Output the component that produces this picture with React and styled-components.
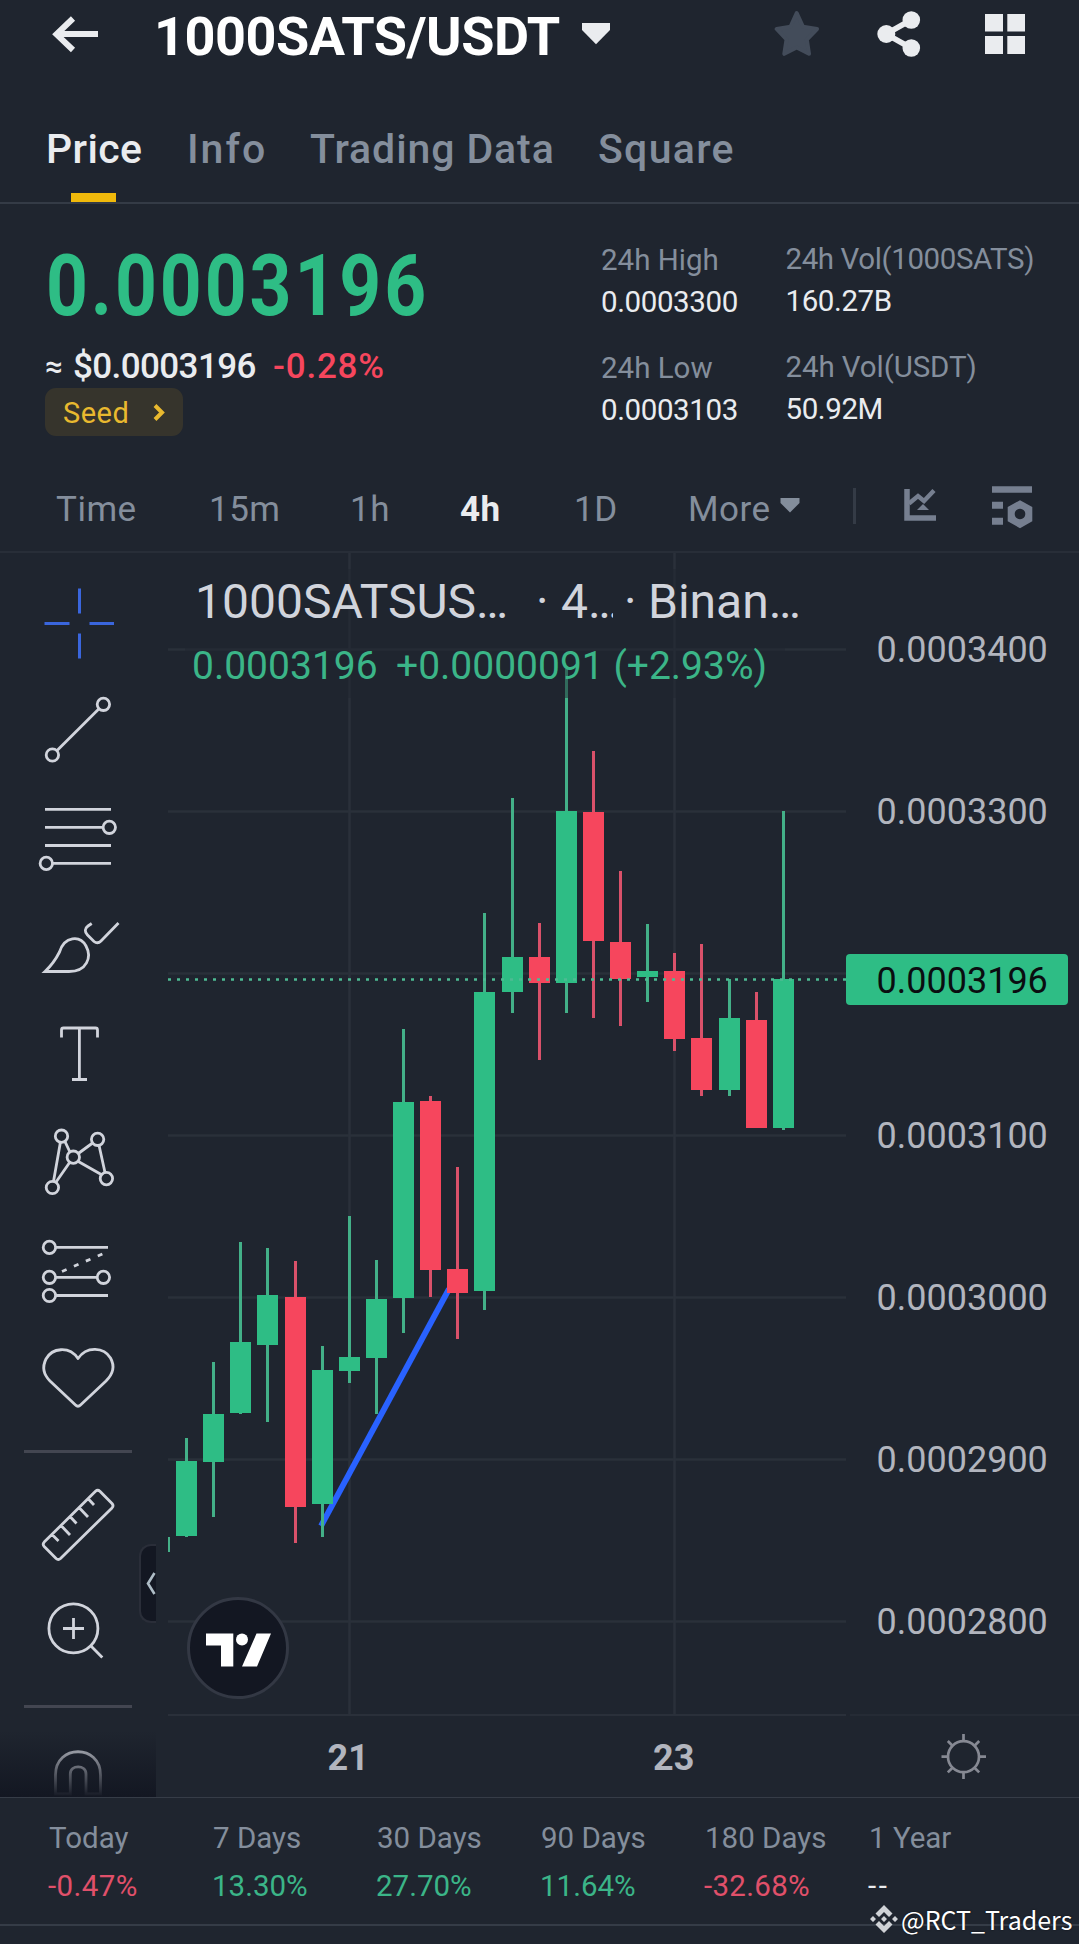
import React from "react";
import styled, { createGlobalStyle } from "styled-components";

const GREEN = "#2ebd85";
const RED = "#f6465d";
const BG = "#1f252f";

const GlobalStyle = createGlobalStyle`
  * {
    box-sizing: border-box;
  }
  body {
    margin: 0;
    background: ${BG};
    font-family: Roboto, "Liberation Sans", sans-serif;
  }
  svg {
    display: block;
    flex: none;
  }
`;

const Page = styled.div`
  position: relative;
  width: 1079px;
  height: 1944px;
  overflow: hidden;
  background: ${BG};
  color: #eaecef;
  white-space: pre;
`;

/* ---------- header ---------- */

const Header = styled.header`
  display: flex;
  align-items: center;
  height: 72px;
  padding: 0 54px 0 45px;
`;

const Title = styled.h1`
  width: 424px;
  margin: 0 0 0 49px;
  font-size: 54px;
  line-height: 73px;
  font-weight: 700;
  letter-spacing: -0.5px;
  color: #fff;
`;

const Actions = styled.div`
  display: flex;
  align-items: center;
  gap: 57px;
  margin-left: auto;
`;

const Tabs = styled.nav`
  display: grid;
  grid-template-columns: 141px 123px 288px auto;
  height: 132px;
  padding: 25px 0 0 46px;
  border-bottom: 2px solid #343b46;
`;

const Tab = styled.div`
  position: relative;
  font-size: 41px;
  line-height: 105px;
  font-weight: 500;
  letter-spacing: ${(p) => p.$spacing || 0}px;
  color: ${(p) => (p.$active ? "#eaecef" : "#848e9c")};

  &::after {
    content: "";
    display: ${(p) => (p.$active ? "block" : "none")};
    position: absolute;
    left: 25px;
    bottom: 0;
    width: 45px;
    height: 9px;
    background: #f0b90b;
  }
`;

/* ---------- price summary ---------- */

const Summary = styled.section`
  display: flex;
  height: 262px;
`;

const PriceBlock = styled.div`
  display: flex;
  flex-direction: column;
  align-items: flex-start;
  width: 601px;
  padding: 37px 0 0 45px;
`;

const BigPrice = styled.div`
  font-size: 85px;
  line-height: 90px;
  font-weight: 700;
  letter-spacing: 3.4px;
  transform: scaleX(0.86);
  transform-origin: left;
  margin-left: 1px;
  color: ${GREEN};
`;

const FiatRow = styled.div`
  display: flex;
  margin-top: 14px;
  font-size: 35px;
  line-height: 43px;
  font-weight: 500;
`;

const Approx = styled.span`
  width: 28px;
  font-size: 31px;
`;

const Fiat = styled.span`
  width: 200px;
  letter-spacing: -0.6px;
`;

const Change = styled.span`
  letter-spacing: 0.8px;
  color: ${RED};
`;

const Seed = styled.div`
  display: flex;
  align-items: center;
  justify-content: space-between;
  width: 138px;
  height: 48px;
  padding: 2px 17px 0 18px;
  border-radius: 11px;
  background: #36342c;
  color: #e9b92f;
  font-size: 29px;
  letter-spacing: 0.5px;
`;

const StatColumn = styled.div`
  width: ${(p) => p.$width}px;
  padding-top: ${(p) => p.$top}px;
`;

const Stat = styled.div`
  margin-bottom: 24px;
  font-size: 29.5px;
  line-height: 42px;
`;

const StatLabel = styled.div`
  color: #848e9c;
  letter-spacing: ${(p) => p.$spacing || 0}px;
`;

const StatValue = styled.div`
  letter-spacing: -0.4px;
`;

/* ---------- interval bar ---------- */

const Intervals = styled.div`
  display: flex;
  align-items: center;
  height: 87px;
  padding-left: 56px;
  border-bottom: 2px solid #282e38;
`;

const Interval = styled.div`
  width: ${(p) => p.$width}px;
  padding-top: 2px;
  font-size: 35px;
  letter-spacing: 0.5px;
  font-weight: ${(p) => (p.$active ? 700 : 400)};
  color: ${(p) => (p.$active ? "#eaecef" : "#848e9c")};
`;

const IntervalDivider = styled.div`
  width: 3px;
  height: 36px;
  margin: 0 47px 6px 53px;
  background: #343b46;
`;

/* ---------- chart ---------- */

const ChartArea = styled.section`
  display: flex;
  height: 1244px;
`;

const Toolbar = styled.aside`
  position: relative;
  width: 156px;
  height: 1244px;
  padding-top: 16px;
  overflow: hidden;
`;

const ToolDivider = styled.div`
  width: 108px;
  height: 3px;
  margin: ${(p) => p.$margin};
  background: #434651;
`;

const ToolbarFade = styled.div`
  position: absolute;
  left: 0;
  right: 0;
  bottom: 0;
  height: 66px;
  background: linear-gradient(rgba(19, 23, 34, 0), #131722);
`;

const CollapseTab = styled.div`
  position: absolute;
  right: 0;
  top: 991px;
  width: 17px;
  height: 79px;
  border: 2px solid #2a2e39;
  border-right: 0;
  border-radius: 12px 0 0 12px;
  background: #131722;
`;

const ChartMain = styled.div`
  display: flex;
  flex-direction: column;
  width: 923px;
  padding-left: 12px;
`;

const ChartTop = styled.div`
  display: flex;
  height: 1161px;
`;

const Pane = styled.div`
  position: relative;
  width: 678px;
`;

const Legend = styled.div`
  position: absolute;
  left: 17px;
  top: 16px;
  width: 600px;
  height: 129px;
  background: rgba(31, 37, 47, 0.5);
`;

const LegendTitle = styled.div`
  display: flex;
  height: 65px;
  padding-left: 10px;
  font-size: 48px;
  line-height: 66px;
  color: #d1d4dc;
`;

const LegendPart = styled.span`
  flex: none;
  width: ${(p) => p.$width}px;
  margin-right: ${(p) => p.$gap || 0}px;
  overflow: hidden;
`;

const LegendValues = styled.div`
  display: flex;
  padding-left: 7px;
  font-size: 39px;
  line-height: 65px;
  color: #3bb588;
`;

const LogoBadge = styled.div`
  position: absolute;
  left: 19px;
  top: 1044px;
  width: 102px;
  height: 102px;
  display: flex;
  align-items: center;
  justify-content: center;
  padding-top: 3px;
  border: 3px solid #333844;
  border-radius: 50%;
  background: #131722;
`;

const PriceAxis = styled.div`
  width: 233px;
  padding-top: 15.5px;
`;

const AxisCell = styled.div`
  display: flex;
  align-items: center;
  height: 162.15px;
  padding-left: ${(p) => (p.$current ? 0 : 30.5)}px;
  padding-top: ${(p) => (p.$current ? 11 : 0)}px;
  font-size: 36px;
  color: #b2b5be;
`;

const CurrentPrice = styled.div`
  width: 222px;
  height: 51px;
  padding-left: 30.5px;
  border-radius: 4px;
  line-height: 54px;
  background: ${GREEN};
  color: #0a0d10;
`;

const TimeRow = styled.div`
  display: flex;
  height: 83px;
`;

const TimeAxis = styled.div`
  display: flex;
  width: 678px;
  margin-right: 4px;
  padding-left: 17.5px;
  border-top: 2px solid #2a303a;
`;

const TimeLabel = styled.div`
  width: 325.5px;
  font-size: 36px;
  line-height: 84px;
  font-weight: 700;
  text-align: center;
  color: #b2b5be;
`;

const AxisSettings = styled.div`
  width: 229px;
  border-top: 2px solid #252b35;
`;

/* ---------- footer ---------- */

const Periods = styled.section`
  display: grid;
  grid-template-columns: repeat(6, 164px);
  height: 129px;
  padding: 16px 0 0 49px;
  border-top: 1px solid #363c47;
  border-bottom: 2px solid #353c47;
  font-size: 29.5px;
  line-height: 48px;
`;

const PeriodLabel = styled.div`
  color: #848e9c;
`;

const PeriodValue = styled.div`
  margin-left: -1px;
  letter-spacing: ${(p) => p.$spacing || 0}px;
  color: ${(p) => p.$color};
`;

const Watermark = styled.div`
  position: absolute;
  left: 869px;
  top: 1901px;
  display: flex;
  align-items: center;
  gap: 2px;
  font-family: "Noto Sans CJK SC", sans-serif;
  font-size: 25px;
  line-height: 36px;
  color: #fff;
  text-shadow: 0 0 2px rgba(0, 0, 0, 0.6);
`;

// [x, high, bodyTop, bodyBottom, low, up]
const candles = [
  [186.5, 1438, 1461, 1536, 1537, 1],
  [213.5, 1362, 1414, 1462, 1517, 1],
  [240.5, 1242, 1342, 1413, 1414, 1],
  [267.5, 1248, 1295, 1345, 1422, 1],
  [295.5, 1261, 1297, 1507, 1543, 0],
  [322.5, 1346, 1370, 1504, 1537, 1],
  [349.5, 1216, 1357, 1371, 1383, 1],
  [376.5, 1260, 1299, 1358, 1414, 1],
  [403.5, 1029, 1102, 1298, 1333, 1],
  [430.5, 1096, 1101, 1270, 1297, 0],
  [457.5, 1167, 1269, 1293, 1339, 0],
  [484.5, 913, 992, 1291, 1310, 1],
  [512.5, 798, 957, 992, 1013, 1],
  [539.5, 923, 957, 983, 1060, 0],
  [566.5, 669, 811, 983, 1013, 1],
  [593.5, 751, 812, 941, 1018, 0],
  [620.5, 871, 942, 979, 1026, 0],
  [647.5, 924, 971, 977, 1002, 1],
  [674.5, 953, 971, 1039, 1051, 0],
  [701.5, 944, 1038, 1090, 1096, 0],
  [729.5, 979, 1018, 1090, 1096, 1],
  [756.5, 992, 1020, 1128, 1128, 0],
  [783.5, 811, 979, 1128, 1130, 1],
];

const gridRows = [649.5, 811.5, 973.5, 1135.5, 1297.5, 1459.5, 1621.5];

const CandleChart = () => (
  <svg width="678" height="1161" viewBox="168 553 678 1161">
    <g stroke="#2a303a" strokeWidth="2.6">
      {gridRows.map((y) => (
        <line key={y} x1="168" x2="846" y1={y} y2={y} />
      ))}
      <line x1="349.5" x2="349.5" y1="553" y2="1714" />
      <line x1="674.5" x2="674.5" y1="553" y2="1714" />
    </g>
    <line x1="321" y1="1526" x2="449" y2="1289" stroke="#2962ff" strokeWidth="5.8" />
    <rect x="168" y="1537" width="2" height="15" fill="#45b088" />
    {candles.map(([x, high, top, bottom, low, up]) => (
      <g key={x}>
        <rect x={x - 1.5} y={high} width="3" height={low - high} fill={up ? "#43b088" : "#d9516a"} />
        <rect x={x - 10.5} y={top} width="21" height={bottom - top} fill={up ? GREEN : RED} />
      </g>
    ))}
    <line x1="168" x2="846" y1="979.5" y2="979.5" stroke="#4dbb93" strokeWidth="2.6" strokeDasharray="3 6" />
  </svg>
);

const Tool = ({ top, height = 108, children }) => (
  <svg
    width="156"
    height={height}
    viewBox={`0 ${top} 156 ${height}`}
    fill="none"
    stroke="#d1d4dc"
    strokeWidth="2.8"
  >
    {children}
  </svg>
);

const Tools = () => (
  <Toolbar>
    <Tool top={569}>
      <path
        d="M79.5 588.5V613.5M79.5 633.5V658.5M44.5 623.5H69.5M89.5 623.5H114"
        stroke="#3a66dd"
        strokeWidth="3"
      />
    </Tool>
    <Tool top={677}>
      <circle cx="103.4" cy="704.3" r="6.2" />
      <circle cx="52.4" cy="755" r="6.2" />
      <path d="M99 708.7L56.8 750.7" />
    </Tool>
    <Tool top={785}>
      <path d="M45 809.4H111M45 827.3H102.5M45 845.5H111M53 863.4H111" />
      <circle cx="109.3" cy="827.3" r="6.2" />
      <circle cx="46.3" cy="863.4" r="6.2" />
    </Tool>
    <Tool top={893}>
      <path d="M45 971.5C52 965 56 959 59.5 952C64.5 936 80 935 86 946C92 957 87 971.5 69 971.5Z" />
      <path d="M91.7 923.5L88 926C84.5 928.5 84.5 932 87.5 935L94 941.5C96.5 943.5 98.5 943.5 101 941L118.5 923" />
    </Tool>
    <Tool top={1001}>
      <path d="M61.5 1037.5V1030Q61.5 1028 63.5 1028H95.5Q97.5 1028 97.5 1030V1037.5M79.4 1028V1079.5M72 1079.5H87" />
    </Tool>
    <Tool top={1109}>
      <circle cx="61.5" cy="1136.2" r="6.2" />
      <circle cx="97.6" cy="1139.3" r="6.2" />
      <circle cx="73.3" cy="1157.2" r="6.2" />
      <circle cx="52.4" cy="1187.5" r="6.2" />
      <circle cx="106.4" cy="1178.6" r="6.2" />
      <path d="M64.9 1141.4L69.9 1152M78.3 1153.5L92.6 1143M60.4 1142.3L53.5 1181.4M55.9 1182.3L69.8 1162.3M77.9 1161.2L101.7 1174.7M99 1145.3L105 1172.5" />
    </Tool>
    <Tool top={1217}>
      <circle cx="49.4" cy="1247.4" r="6.2" />
      <circle cx="49.4" cy="1277.3" r="6.2" />
      <circle cx="103.4" cy="1277.3" r="6.2" />
      <circle cx="49.4" cy="1295.5" r="6.2" />
      <path d="M55.6 1247.4H108M55.6 1277.3H97.2M55.6 1295.5H108" />
      <path d="M62 1271.5L103.5 1253.5" strokeDasharray="5 8" />
    </Tool>
    <Tool top={1325}>
      <path
        d="M78 1358.5C69 1345.5 52 1348 46 1359C42 1367 44 1375 50 1381L75.5 1405Q78 1407.5 80.5 1405L106 1381C113 1374 115 1366 110.5 1358C104 1347.5 87 1345.5 78 1358.5Z"
        strokeLinejoin="round"
      />
    </Tool>
    <ToolDivider $margin="17px 0 18px 24px" />
    <Tool top={1471}>
      <path
        d="M95.5 1491.2Q97.7 1489.2 99.9 1491.2L112 1503.5Q114 1505.7 112 1507.9L60.5 1558.5Q58.3 1560.5 56.1 1558.5L44.2 1546.5Q42.2 1544.3 44.2 1542.1ZM88 1498.5L94 1505M79 1507.5L88 1517M70 1516.5L76.5 1523.5M61 1525.5L70 1535M52 1534.5L58.5 1541"
        strokeLinejoin="round"
      />
    </Tool>
    <Tool top={1579}>
      <circle cx="73.4" cy="1628.4" r="24.5" />
      <path d="M63 1628.5H84M73.5 1618V1639M90.5 1645.5L102.3 1657.5" />
    </Tool>
    <ToolDivider $margin="18px 0 0 24px" />
    <Tool top={1708} height={89}>
      <path d="M55.5 1794V1775C55.5 1744 100.5 1744 100.5 1775V1794H86V1774C86 1764.5 70.3 1764.5 70.3 1774V1794Z" />
    </Tool>
    <ToolbarFade />
    <CollapseTab>
      <svg width="15" height="75" viewBox="0 0 15 75">
        <path d="M13.5 27L7 37.5L13.5 48" fill="none" stroke="#aebcc6" strokeWidth="2.6" />
      </svg>
    </CollapseTab>
  </Toolbar>
);

const HeaderBar = () => (
  <Header>
    <svg width="60" height="72" viewBox="45 0 60 72" fill="none" stroke="#eaecef" strokeWidth="6">
      <path d="M98 34H57M73 18.5L56.5 34.3L73 50" />
    </svg>
    <Title>1000SATS/USDT</Title>
    <svg width="36" height="72" viewBox="578 0 36 72">
      <path d="M582 23H610V30L596 44.3L582 30Z" fill="#eaecef" />
    </svg>
    <Actions>
      <svg width="46" height="72" viewBox="774 0 46 72">
        <path
          d="M796.7 13L803 26.8L817 29L806.8 39.5L809 53.8L796.7 47.5L784.3 53.8L786.5 39.5L776.7 29L790.5 26.8Z"
          fill="#434c5a"
          stroke="#434c5a"
          strokeWidth="4"
          strokeLinejoin="round"
        />
      </svg>
      <svg width="44" height="72" viewBox="877 0 44 72" fill="#eaecef">
        <circle cx="911.3" cy="20" r="8.8" />
        <circle cx="886.3" cy="34" r="9" />
        <circle cx="911.3" cy="48" r="8.8" />
        <path d="M911 20L886 34L911 48" fill="none" stroke="#eaecef" strokeWidth="5.5" />
      </svg>
      <svg width="47" height="72" viewBox="978 0 47 72" fill="#eaecef">
        <path d="M985 14h18v17.5h-18zM1007.3 14h17.7v17.5h-17.7zM985 36h18v18h-18zM1007.3 36h17.7v18h-17.7z" />
      </svg>
    </Actions>
  </Header>
);

const IntervalBar = () => (
  <Intervals>
    <Interval $width={153}>Time</Interval>
    <Interval $width={141}>15m</Interval>
    <Interval $width={110}>1h</Interval>
    <Interval $width={114} $active>
      4h
    </Interval>
    <Interval $width={114}>1D</Interval>
    <Interval $width={92}>More</Interval>
    <svg width="20" height="40" viewBox="780 489 20 40">
      <path d="M780.5 498H799.5V503L790 512.5L780.5 503Z" fill="#848e9c" />
    </svg>
    <IntervalDivider />
    <svg width="34" height="40" viewBox="904 489.500 34 40">
      <g fill="none" stroke="#767f90">
        <path d="M908 489.5V518.5H937" strokeWidth="5.5" />
        <path d="M910 504L919 496.5L925 501.5L935 491" strokeWidth="4.4" />
      </g>
      <path d="M924 504.5L930 510.5H918Z" fill="#767f90" />
    </svg>
    <svg width="96" height="46" viewBox="938 485.300 96 46">
      <path d="M993 485.5h40v6.5h-40zM993 501h11v7h-11zM993 517h11v7h-11z" fill="#767f90" />
      <path
        d="M1021 499.5L1033.300 506.300V520.500L1021 527.500L1008.700 520.500V506.300ZM1021 508a5.300 5.300 0 1 0 .01 0Z"
        fill="#767f90"
        fillRule="evenodd"
      />
    </svg>
  </Intervals>
);

const axisPrices = [
  "0.0003400",
  "0.0003300",
  "0.0003196",
  "0.0003100",
  "0.0003000",
  "0.0002900",
  "0.0002800",
];

const Chart = () => (
  <ChartArea>
    <Tools />
    <ChartMain>
      <ChartTop>
        <Pane>
          <CandleChart />
          <Legend>
            <LegendTitle>
              <LegendPart $width={341}>1000SATSUS…</LegendPart>
              <LegendPart $width={25}>·</LegendPart>
              <LegendPart $width={52} $gap={11}>
                4…
              </LegendPart>
              <LegendPart $width={24}>·</LegendPart>
              <LegendPart $width={160}>Binan…</LegendPart>
            </LegendTitle>
            <LegendValues>
              <LegendPart $width={204}>0.0003196</LegendPart>
              <span>+0.0000091 (+2.93%)</span>
            </LegendValues>
          </Legend>
          <LogoBadge>
            <svg width="66" height="34" viewBox="206 1632.5 66 34" fill="#fff">
              <path d="M207 1633H234.3V1666H222V1645H207ZM257.5 1633H272L258 1666H243Z" />
              <circle cx="243" cy="1639" r="6" />
            </svg>
          </LogoBadge>
        </Pane>
        <PriceAxis>
          {axisPrices.map((price) =>
            price === "0.0003196" ? (
              <AxisCell key={price} $current>
                <CurrentPrice>{price}</CurrentPrice>
              </AxisCell>
            ) : (
              <AxisCell key={price}>{price}</AxisCell>
            )
          )}
        </PriceAxis>
      </ChartTop>
      <TimeRow>
        <TimeAxis>
          <TimeLabel>21</TimeLabel>
          <TimeLabel>23</TimeLabel>
        </TimeAxis>
        <AxisSettings>
          <svg width="229" height="81" viewBox="850 1716 229 81" fill="none" stroke="#868993" strokeWidth="2.7">
            <circle cx="963.5" cy="1756.7" r="15.5" />
            <path d="M963.5 1741V1734M963.5 1772.5V1779M947.5 1756.7H941.5M979.5 1756.7H986M952.5 1745.7L947.8 1741M974.5 1745.7L979.2 1741M952.5 1767.7L947.8 1772.4M974.5 1767.7L979.2 1772.4" />
          </svg>
        </AxisSettings>
      </TimeRow>
    </ChartMain>
  </ChartArea>
);

const periods = [
  { label: "Today", value: "-0.47%", color: "#e0506a", spacing: 0.4 },
  { label: "7 Days", value: "13.30%", color: "#3bb588" },
  { label: "30 Days", value: "27.70%", color: "#3bb588" },
  { label: "90 Days", value: "11.64%", color: "#3bb588" },
  { label: "180 Days", value: "-32.68%", color: "#e0506a", spacing: 0.3 },
  { label: "1 Year", value: "--", color: "#eaecef", spacing: 2.5 },
];

const App = () => {
  return (
    <Page>
      <GlobalStyle />
      <HeaderBar />
      <Tabs>
        <Tab $active $spacing={0.4}>
          Price
        </Tab>
        <Tab $spacing={2}>Info</Tab>
        <Tab $spacing={0.9}>Trading Data</Tab>
        <Tab $spacing={1.3}>Square</Tab>
      </Tabs>
      <Summary>
        <PriceBlock>
          <BigPrice>0.0003196</BigPrice>
          <FiatRow>
            <Approx>≈</Approx>
            <Fiat>$0.0003196</Fiat>
            <Change>-0.28%</Change>
          </FiatRow>
          <Seed>
            Seed
            <svg width="14" height="20" viewBox="0 0 14 20">
              <path d="M3 2.5L10 9.5L3 16.5" fill="none" stroke="#e9b92f" strokeWidth="4" />
            </svg>
          </Seed>
        </PriceBlock>
        <StatColumn $width={184.5} $top={35}>
          <Stat>
            <StatLabel>24h High</StatLabel>
            <StatValue>0.0003300</StatValue>
          </Stat>
          <Stat>
            <StatLabel>24h Low</StatLabel>
            <StatValue>0.0003103</StatValue>
          </Stat>
        </StatColumn>
        <StatColumn $width={290} $top={34}>
          <Stat>
            <StatLabel $spacing={-0.4}>24h Vol(1000SATS)</StatLabel>
            <StatValue>160.27B</StatValue>
          </Stat>
          <Stat>
            <StatLabel $spacing={-0.1}>24h Vol(USDT)</StatLabel>
            <StatValue>50.92M</StatValue>
          </Stat>
        </StatColumn>
      </Summary>
      <IntervalBar />
      <Chart />
      <Periods>
        {periods.map((period) => (
          <div key={period.label}>
            <PeriodLabel>{period.label}</PeriodLabel>
            <PeriodValue $color={period.color} $spacing={period.spacing}>
              {period.value}
            </PeriodValue>
          </div>
        ))}
      </Periods>
      <Watermark>
        <svg width="30" height="30" viewBox="0 0 30 30" fill="#cfd2d6">
          <path d="M15 1L23.5 9.5L20 13L15 8L10 13L6.5 9.5ZM15 29L6.5 20.5L10 17L15 22L20 17L23.5 20.5ZM15 12L18 15L15 18L12 15ZM4 12L7 15L4 18L1 15ZM26 12L29 15L26 18L23 15Z" />
        </svg>
        @RCT_Traders
      </Watermark>
    </Page>
  );
};

export default App;
